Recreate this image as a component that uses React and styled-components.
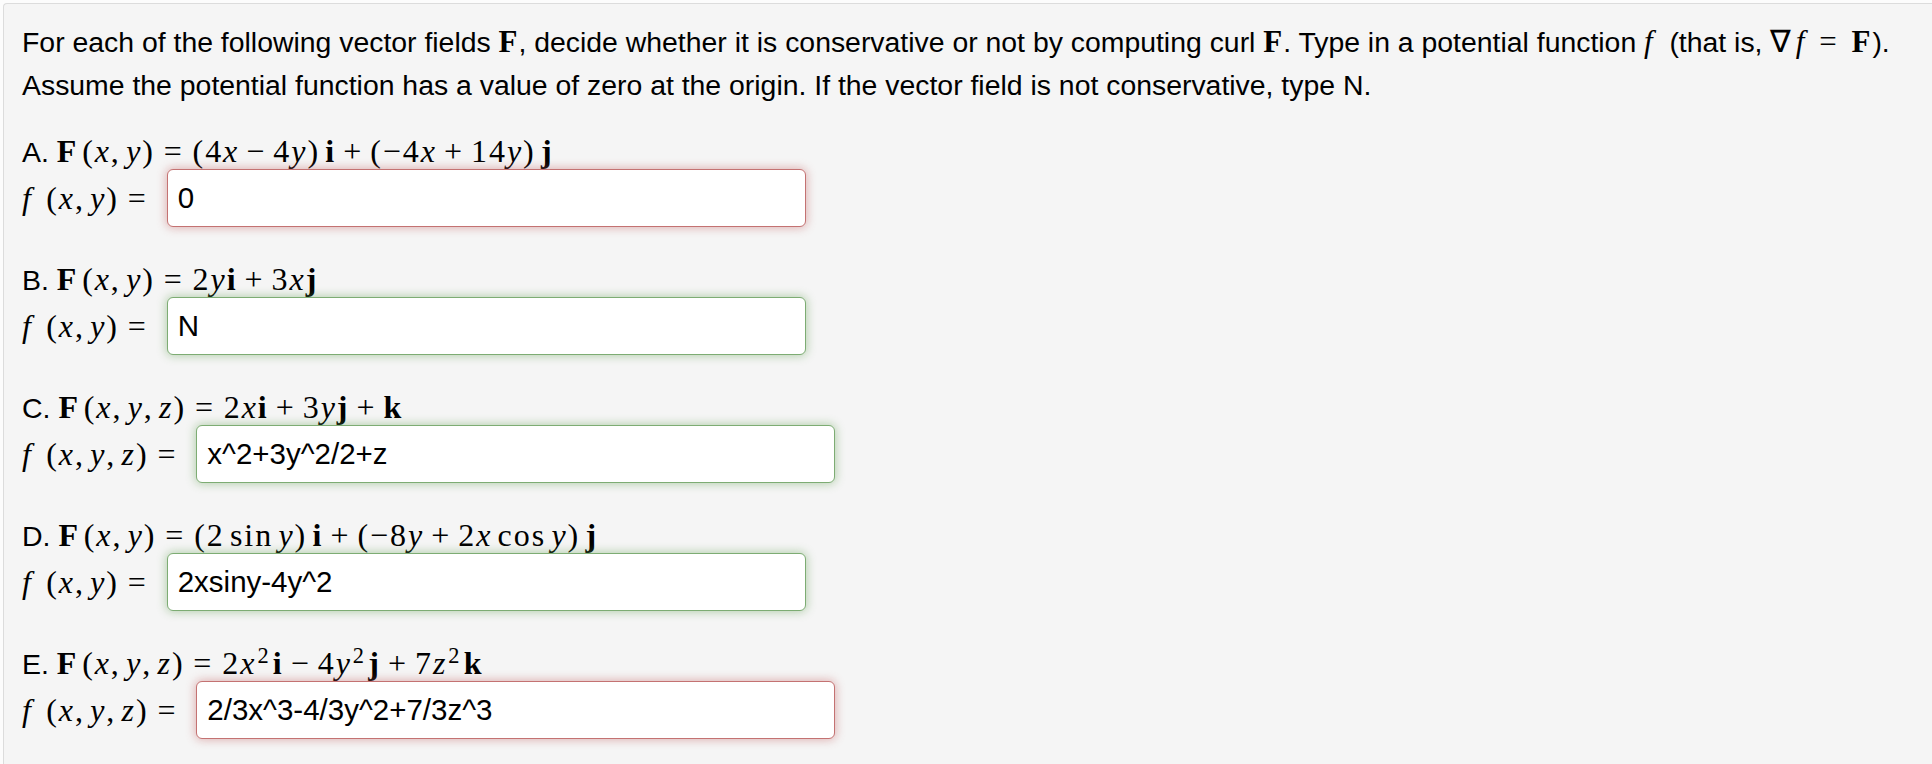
import React from "react";
import styled, { createGlobalStyle } from "styled-components";

const Global = createGlobalStyle`
  html, body { margin: 0; padding: 0; background: #fcfcfc; }
  body { font-family: "Liberation Sans", Arial, sans-serif; color: #000; }
`;

const Panel = styled.div`
  margin: 3px 0 0 3px;
  min-height: 780px;
  background: #f5f5f5;
  border: 1px solid #dcdcdc;
  border-right: none;
  border-radius: 4px 0 0 0;
  padding: 16px 0 0 18px;
  box-sizing: border-box;
`;

const Intro = styled.p`
  margin: 0 0 24px 0;
  font-size: 28.4px;
  line-height: 43px;
`;

const Section = styled.div`
  margin-bottom: 32px;
`;

const LabelLine = styled.div`
  font-size: 28.5px;
  line-height: 38px;
  height: 38px;
  padding-top: 1px;
  box-sizing: border-box;
  white-space: nowrap;
`;

const Math = styled.span`
  font-family: "Liberation Serif", "Times New Roman", serif;
  font-size: ${(p) => p.$size || 32}px;
  letter-spacing: ${(p) => p.$ls ?? 0.06}em;
`;

const I = styled.span`
  font-style: italic;
`;

const B = styled.span`
  font-weight: bold;
`;

const Op = styled.span`
  margin: 0 ${(p) => p.$sp ?? 0.222}em;
`;

const Sup = styled.sup`
  font-size: 0.7em;
  line-height: 0;
  vertical-align: 0.5em;
  margin: 0 0.1em 0 0.05em;
`;

const Gap = styled.span`
  margin-left: ${(p) => p.$w ?? 0.167}em;
`;

const Row = styled.div`
  display: flex;
  align-items: center;
  gap: 10px;
  height: 58px;
`;

const Answer = styled.input`
  box-sizing: border-box;
  width: 639px;
  height: 58px;
  border-radius: 6px;
  background: #fff;
  font-family: "Liberation Sans", Arial, sans-serif;
  font-size: 29.5px;
  color: #000;
  padding: 0 10px;
  outline: none;
  border: 1.5px solid ${(p) => (p.$ok ? "#7dac73" : "#c47272")};
  box-shadow: 0 0 10px 1px
    ${(p) => (p.$ok ? "rgba(100, 160, 85, 0.45)" : "rgba(195, 95, 95, 0.45)")};
`;

const Args = ({ z, lead = 0.12 }) => (
  <>
    <Gap $w={lead} />(<I>x</I>,<Gap /><I>y</I>
    {z && (
      <>
        ,<Gap />
        <I>z</I>
      </>
    )}
    )
  </>
);

const Eq = ({ sp = 0.278 }) => <Op $sp={sp}>=</Op>;

const FLabel = ({ z }) => (
  <Math>
    <I>f</I>
    <Args z={z} lead={0.42} />
    <Eq />
  </Math>
);

const items = [
  {
    key: "A",
    z: false,
    ok: false,
    value: "0",
    rhs: (
      <>
        (4<I>x</I>
        <Op>−</Op>4<I>y</I>)<Gap />
        <B>i</B>
        <Op>+</Op>(−4<I>x</I>
        <Op>+</Op>14<I>y</I>)<Gap />
        <B>j</B>
      </>
    ),
  },
  {
    key: "B",
    z: false,
    ok: true,
    value: "N",
    rhs: (
      <>
        2<I>y</I>
        <B>i</B>
        <Op>+</Op>3<I>x</I>
        <B>j</B>
      </>
    ),
  },
  {
    key: "C",
    z: true,
    ok: true,
    value: "x^2+3y^2/2+z",
    rhs: (
      <>
        2<I>x</I>
        <B>i</B>
        <Op>+</Op>3<I>y</I>
        <B>j</B>
        <Op>+</Op>
        <B>k</B>
      </>
    ),
  },
  {
    key: "D",
    z: false,
    ok: true,
    value: "2xsiny-4y^2",
    rhs: (
      <>
        (2<Gap />sin<Gap />
        <I>y</I>)<Gap />
        <B>i</B>
        <Op>+</Op>(−8<I>y</I>
        <Op>+</Op>2<I>x</I>
        <Gap />cos<Gap />
        <I>y</I>)<Gap />
        <B>j</B>
      </>
    ),
  },
  {
    key: "E",
    z: true,
    ok: false,
    value: "2/3x^3-4/3y^2+7/3z^3",
    rhs: (
      <>
        2<I>x</I>
        <Sup>2</Sup>
        <B>i</B>
        <Op>−</Op>4<I>y</I>
        <Sup>2</Sup>
        <B>j</B>
        <Op>+</Op>7<I>z</I>
        <Sup>2</Sup>
        <B>k</B>
      </>
    ),
  },
];

export default function App() {
  return (
    <>
      <Global />
      <Panel>
        <Intro>
          For each of the following vector fields{" "}
          <Math $size={31} $ls={0.03}>
            <B>F</B>
          </Math>
          , decide whether it is conservative or not by computing curl{" "}
          <Math $size={31} $ls={0.03}>
            <B>F</B>
          </Math>
          . Type in a potential function{" "}
          <Math $size={31} $ls={0.03}>
            <I>f</I>
          </Math>
          &nbsp;&nbsp;(that is,{" "}
          <Math $size={31} $ls={0.06}>
            ∇<Gap $w={0.08} />
            <I>f</I>
            <Eq sp={0.42} />
            <B>F</B>
          </Math>
          ).
          <br />
          Assume the potential function has a value of zero at the origin. If the vector
          field is not conservative, type N.
        </Intro>
        {items.map((it) => (
          <Section key={it.key}>
            <LabelLine>
              {it.key}.{" "}
              <Math>
                <B>F</B>
                <Args z={it.z} />
                <Eq />
                {it.rhs}
              </Math>
            </LabelLine>
            <Row>
              <FLabel z={it.z} />
              <Answer $ok={it.ok} defaultValue={it.value} readOnly />
            </Row>
          </Section>
        ))}
      </Panel>
    </>
  );
}
